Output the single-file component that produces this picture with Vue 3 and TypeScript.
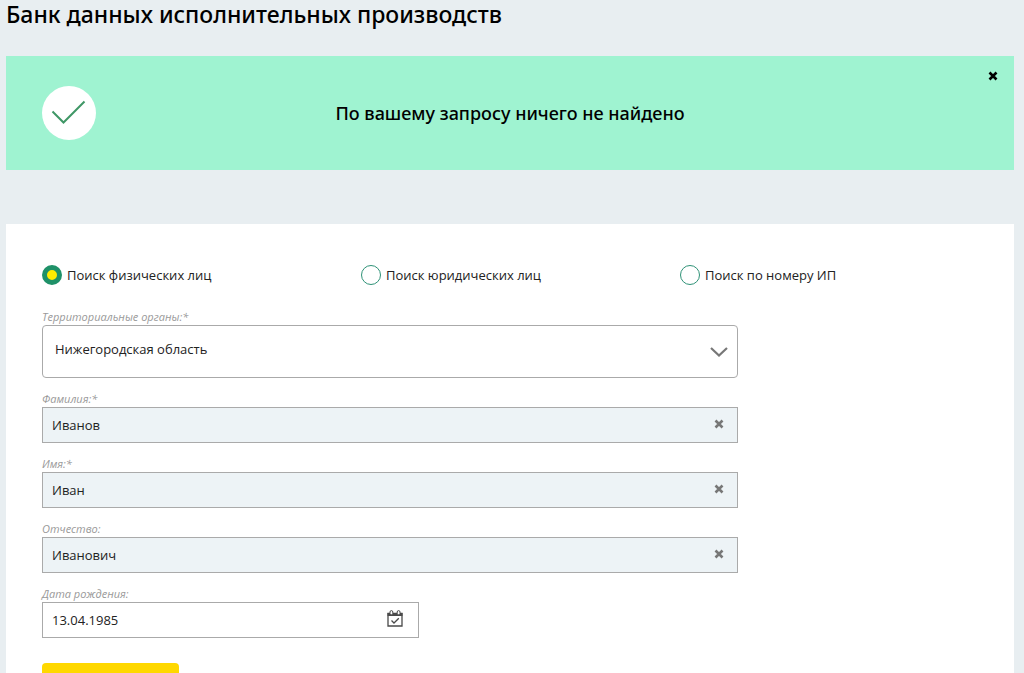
<script setup lang="ts">
import { reactive, ref } from 'vue'

type Mode = 'person' | 'company' | 'number'
type NameKey = 'surname' | 'name' | 'patronymic'

const modes: { value: Mode; label: string }[] = [
  { value: 'person', label: 'Поиск физических лиц' },
  { value: 'company', label: 'Поиск юридических лиц' },
  { value: 'number', label: 'Поиск по номеру ИП' },
]

const nameFields: { key: NameKey; label: string }[] = [
  { key: 'surname', label: 'Фамилия:*' },
  { key: 'name', label: 'Имя:*' },
  { key: 'patronymic', label: 'Отчество:' },
]

const mode = ref<Mode>('person')
const region = ref('Нижегородская область')
const birthDate = ref('13.04.1985')
const showNotice = ref(true)
const person = reactive<Record<NameKey, string>>({
  surname: 'Иванов',
  name: 'Иван',
  patronymic: 'Иванович',
})
</script>

<template>
  <main class="page">
    <h1 class="title">Банк данных исполнительных производств</h1>

    <section v-if="showNotice" class="notice" role="status">
      <svg class="notice-icon" viewBox="0 0 54 54" aria-hidden="true">
        <circle cx="27" cy="27" r="27" fill="#fff" />
        <path d="M10.5 25.5 21.5 36.5 42.5 15.5" fill="none" stroke="#3f9766" stroke-width="2" />
      </svg>
      <p class="notice-text">По вашему запросу ничего не найдено</p>
      <button class="notice-close" type="button" aria-label="Закрыть" @click="showNotice = false">
        <svg class="cross" viewBox="0 0 10 10" aria-hidden="true">
          <path d="M1.5 1.5 8.5 8.5M8.5 1.5 1.5 8.5" />
        </svg>
      </button>
    </section>

    <form class="panel" @submit.prevent>
      <div class="modes" role="radiogroup">
        <label v-for="m in modes" :key="m.value" class="mode">
          <input v-model="mode" class="radio" type="radio" name="mode" :value="m.value" />
          <span>{{ m.label }}</span>
        </label>
      </div>

      <div class="field">
        <label class="label" for="region">Территориальные органы:*</label>
        <div class="control">
          <select id="region" v-model="region" class="select">
            <option>Нижегородская область</option>
          </select>
          <svg class="chevron" viewBox="0 0 18 10" aria-hidden="true">
            <path d="M1 1 9 8.5 17 1" fill="none" stroke="#777" stroke-width="2.2" />
          </svg>
        </div>
      </div>

      <div v-for="f in nameFields" :key="f.key" class="field">
        <label class="label" :for="f.key">{{ f.label }}</label>
        <div class="control">
          <input :id="f.key" v-model="person[f.key]" class="input filled" type="text" />
          <button class="clear" type="button" aria-label="Очистить" @click="person[f.key] = ''">
            <svg class="cross" viewBox="0 0 10 10" aria-hidden="true">
              <path d="M1.5 1.5 8.5 8.5M8.5 1.5 1.5 8.5" />
            </svg>
          </button>
        </div>
      </div>

      <div class="field short">
        <label class="label" for="birth">Дата рождения:</label>
        <div class="control">
          <input id="birth" v-model="birthDate" class="input" type="text" />
          <button class="calendar" type="button" aria-label="Календарь">
            <svg class="calendar-icon" viewBox="0 0 16 17" aria-hidden="true">
              <path d="M1 3.5H15V16H1Z" fill="#fff" stroke="#4a4a4a" stroke-width="1.3" />
              <path d="M.5 3H15.5V6H.5Z" fill="#4a4a4a" />
              <rect x="3" y=".6" width="2.8" height="4.2" rx="1.4" fill="#fff" stroke="#4a4a4a" />
              <rect x="10.2" y=".6" width="2.8" height="4.2" rx="1.4" fill="#fff" stroke="#4a4a4a" />
              <path d="M4.5 10.5 7 13 11.8 8.2" fill="none" stroke="#4a4a4a" stroke-width="1.3" />
            </svg>
          </button>
        </div>
      </div>

      <button class="submit" type="submit" aria-label="Найти"></button>
    </form>
  </main>
</template>

<style>
html {
  background: #e8eef1;
  scrollbar-width: none;
}

body {
  margin: 0;
}
</style>

<style scoped>
.page {
  box-sizing: border-box;
  padding: 0 10px 0 6px;
  font-family: 'Open Sans', 'Noto Sans', sans-serif;
  font-size: 13px;
  color: #222;
}

.title {
  margin: 0;
  padding-bottom: 28px;
  font-family: 'Noto Sans', 'Open Sans', sans-serif;
  font-size: 23px;
  line-height: 28px;
  font-weight: 500;
  color: #000;
}

.notice {
  position: relative;
  display: flex;
  align-items: center;
  padding: 30px 36px;
  margin-bottom: 54px;
  background: #9ff3d1;
}

.notice-icon {
  flex: none;
  width: 54px;
  height: 54px;
}

.notice-text {
  flex: 1;
  margin: 0 54px 0 0;
  text-align: center;
  font-family: 'Noto Sans', 'Open Sans', sans-serif;
  font-size: 18px;
  line-height: 24px;
  font-weight: 500;
  color: #000;
}

button {
  padding: 0;
  border: 0;
  background: none;
  font: inherit;
  cursor: pointer;
}

.cross {
  display: block;
  width: 10px;
  height: 10px;
  fill: none;
  stroke: currentColor;
  stroke-width: 2.6;
}

.notice-close {
  position: absolute;
  top: 15px;
  right: 16px;
  color: #000;
}

.panel {
  display: grid;
  grid-template-columns: repeat(12, 1fr);
  column-gap: 22px;
  row-gap: 13px;
  padding: 40px 36px;
  background: #fff;
}

.modes {
  grid-column: 1 / -1;
  display: grid;
  grid-template-columns: repeat(3, 1fr);
  column-gap: 21px;
  margin-bottom: 10px;
}

.mode {
  display: flex;
  align-items: center;
  gap: 5px;
  line-height: 22px;
}

.radio {
  appearance: none;
  box-sizing: border-box;
  width: 20px;
  height: 20px;
  margin: 0;
  border: 1px solid #2f9277;
  border-radius: 50%;
  background: #fff;
}

.radio:checked {
  border: 5px solid #1f9168;
  background: #ffec00;
}

.field {
  grid-column: span 9;
}

.short {
  grid-column: 1 / span 5;
}

.label {
  display: block;
  font-size: 11px;
  line-height: 16px;
  font-style: italic;
  color: #999;
}

.control {
  position: relative;
}

.select,
.input {
  display: block;
  box-sizing: border-box;
  width: 100%;
  border: 1px solid #aaa;
  background: #fff;
  font: inherit;
  color: #222;
}

.select {
  appearance: none;
  height: 53px;
  padding: 0 48px 6px 12px;
  border-radius: 4px;
}

.input {
  height: 36px;
  padding: 0 48px 0 9px;
  border-radius: 0;
}

.filled {
  background: #edf3f6;
}

.chevron {
  position: absolute;
  top: 22px;
  right: 10px;
  width: 18px;
  height: 10px;
  pointer-events: none;
}

.clear {
  position: absolute;
  top: 12px;
  right: 14px;
  color: #777;
}

.calendar {
  position: absolute;
  top: 8px;
  right: 16px;
}

.calendar-icon {
  display: block;
  width: 16px;
  height: 17px;
}

.submit {
  grid-column: 1 / -1;
  justify-self: start;
  width: 137px;
  height: 44px;
  margin-top: 12px;
  border-radius: 4px;
  background: #ffd800;
}
</style>
